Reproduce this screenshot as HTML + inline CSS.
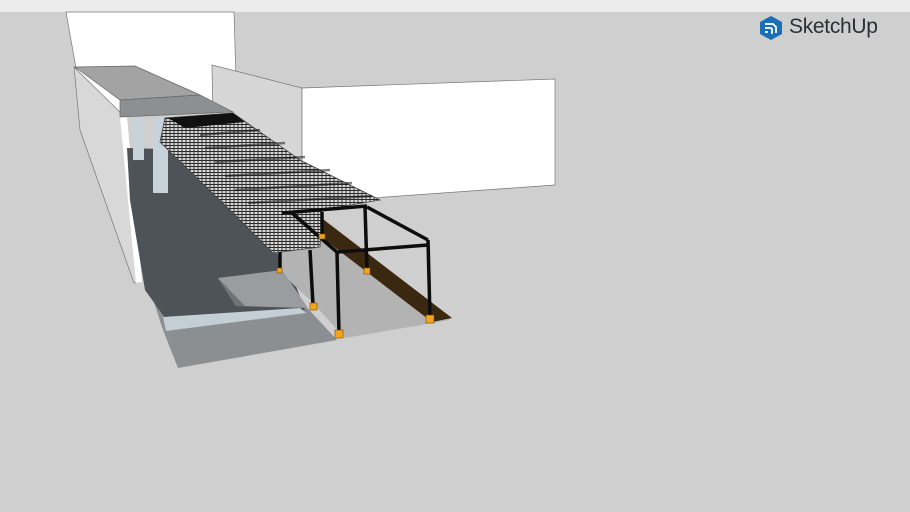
<!DOCTYPE html>
<html><head><style>
html,body{margin:0;padding:0;width:910px;height:512px;overflow:hidden;background:#cfcfcf}
.top{position:absolute;left:0;top:0;width:910px;height:12px;background:#ececec}
svg{position:absolute;left:0;top:0}
.logo{position:absolute;left:789px;top:15px;font:500 21px "Liberation Sans",sans-serif;color:#2b2f36;letter-spacing:-0.3px}
</style></head><body>
<div class="top"></div>
<svg width="910" height="512" viewBox="0 0 910 512">
<defs>
<pattern id="mesh" width="4" height="3" patternUnits="userSpaceOnUse">
<rect width="4" height="3" fill="#d8d8d8"/>
<path d="M0 1.5H4M2 0V3" stroke="#2a2a2a" stroke-width="0.9"/>
</pattern>
</defs>
<polygon points="66,12 234,12 237,112 100,112 76,68" fill="#fff" stroke="#777" stroke-width="0.7"/>
<polygon points="212,65 302,88 302,202 214,185" fill="#d6d6d6" stroke="#777" stroke-width="0.7"/>
<polygon points="302,88 555,79 555,185 302,203" fill="#fff" stroke="#777" stroke-width="0.7"/>
<polygon points="74,67 125,117 140,282 134,283 80,130" fill="#d8d8d8" stroke="#777" stroke-width="0.7"/>
<polygon points="120,117 127,117 142,282 136,283" fill="#fff"/>
<polygon points="150,290 300,300 337,340 178,368 163,330" fill="#8c8f92"/>
<polygon points="127,148 200,150 290,270 305,310 165,318 145,290 130,200" fill="#4d5356"/>
<polygon points="283,215 300,213 450,320 345,338 310,300 280,272" fill="#b3b3b3"/>
<polygon points="290,213 315,213 452,318 432,322" fill="#3b2810"/>
<polygon points="163,317 300,308 306,313 166,331" fill="#c4ced5"/>
<polygon points="218,278 282,270 308,308 236,306" fill="#9a9d9f"/>
<polygon points="218,278 236,306 245,306" fill="#6f7376"/>
<rect x="133" y="118" width="11" height="42" fill="#c8d2d9"/>
<rect x="153" y="118" width="15" height="75" fill="#c8d2d9"/>
<polygon points="75,67 135,66 200,95 120,100" fill="#a3a3a3" stroke="#666" stroke-width="0.7"/>
<polygon points="120,100 200,95 233,112 120,117" fill="#8e8f90" stroke="#666" stroke-width="0.7"/>
<polygon points="160,142 165,118 233,113 300,160 380,200 322,210 320,247 273,253 230,210" fill="url(#mesh)" stroke="#444" stroke-width="0.8"/>
<polygon points="168,118 233,113 245,122 185,128" fill="#111"/>
<g stroke="#1a1a1a" stroke-width="2.5" opacity="0.55">
<line x1="200" y1="135" x2="260" y2="130"/>
<line x1="205" y1="148" x2="285" y2="143"/>
<line x1="215" y1="162" x2="305" y2="157"/>
<line x1="225" y1="176" x2="330" y2="170"/>
<line x1="235" y1="190" x2="352" y2="183"/>
<line x1="248" y1="203" x2="372" y2="196"/>
</g>
<g stroke="#0d0d0d" stroke-width="3.5" fill="none">
<line x1="322" y1="212" x2="322" y2="237"/>
<line x1="365" y1="207" x2="367" y2="270"/>
<line x1="310" y1="250" x2="313" y2="305"/>
<line x1="337" y1="253" x2="339" y2="333"/>
<line x1="428" y1="240" x2="430" y2="318"/>
<line x1="282" y1="213" x2="367" y2="206"/>
<line x1="292" y1="213" x2="338" y2="253"/>
<line x1="367" y1="207" x2="428" y2="240"/>
<line x1="338" y1="252" x2="428" y2="245"/>
<line x1="280" y1="252" x2="280" y2="270"/>
</g>
<g fill="#f2a51e" stroke="#7a4a00" stroke-width="0.6">
<rect x="310" y="303" width="7" height="7"/>
<rect x="335" y="330" width="8" height="8"/>
<rect x="364" y="268" width="6" height="6"/>
<rect x="426" y="315" width="8" height="8"/>
<rect x="319" y="234" width="6" height="5"/>
<rect x="277" y="268" width="5" height="5"/>
</g>
<g transform="translate(760,16)">
<path d="M11 0 L22 6 L22 18 L11 24 L0 18 L0 6 Z" fill="#1a6fb5"/>
<path d="M5 8 L13 8 L16 11 L16 17 M5 12 L11 12 L12 13 L12 18 M5 16 L8 16" stroke="#fff" stroke-width="1.8" fill="none"/>
</g>
</svg>
<div class="logo">SketchUp</div>
</body></html>
